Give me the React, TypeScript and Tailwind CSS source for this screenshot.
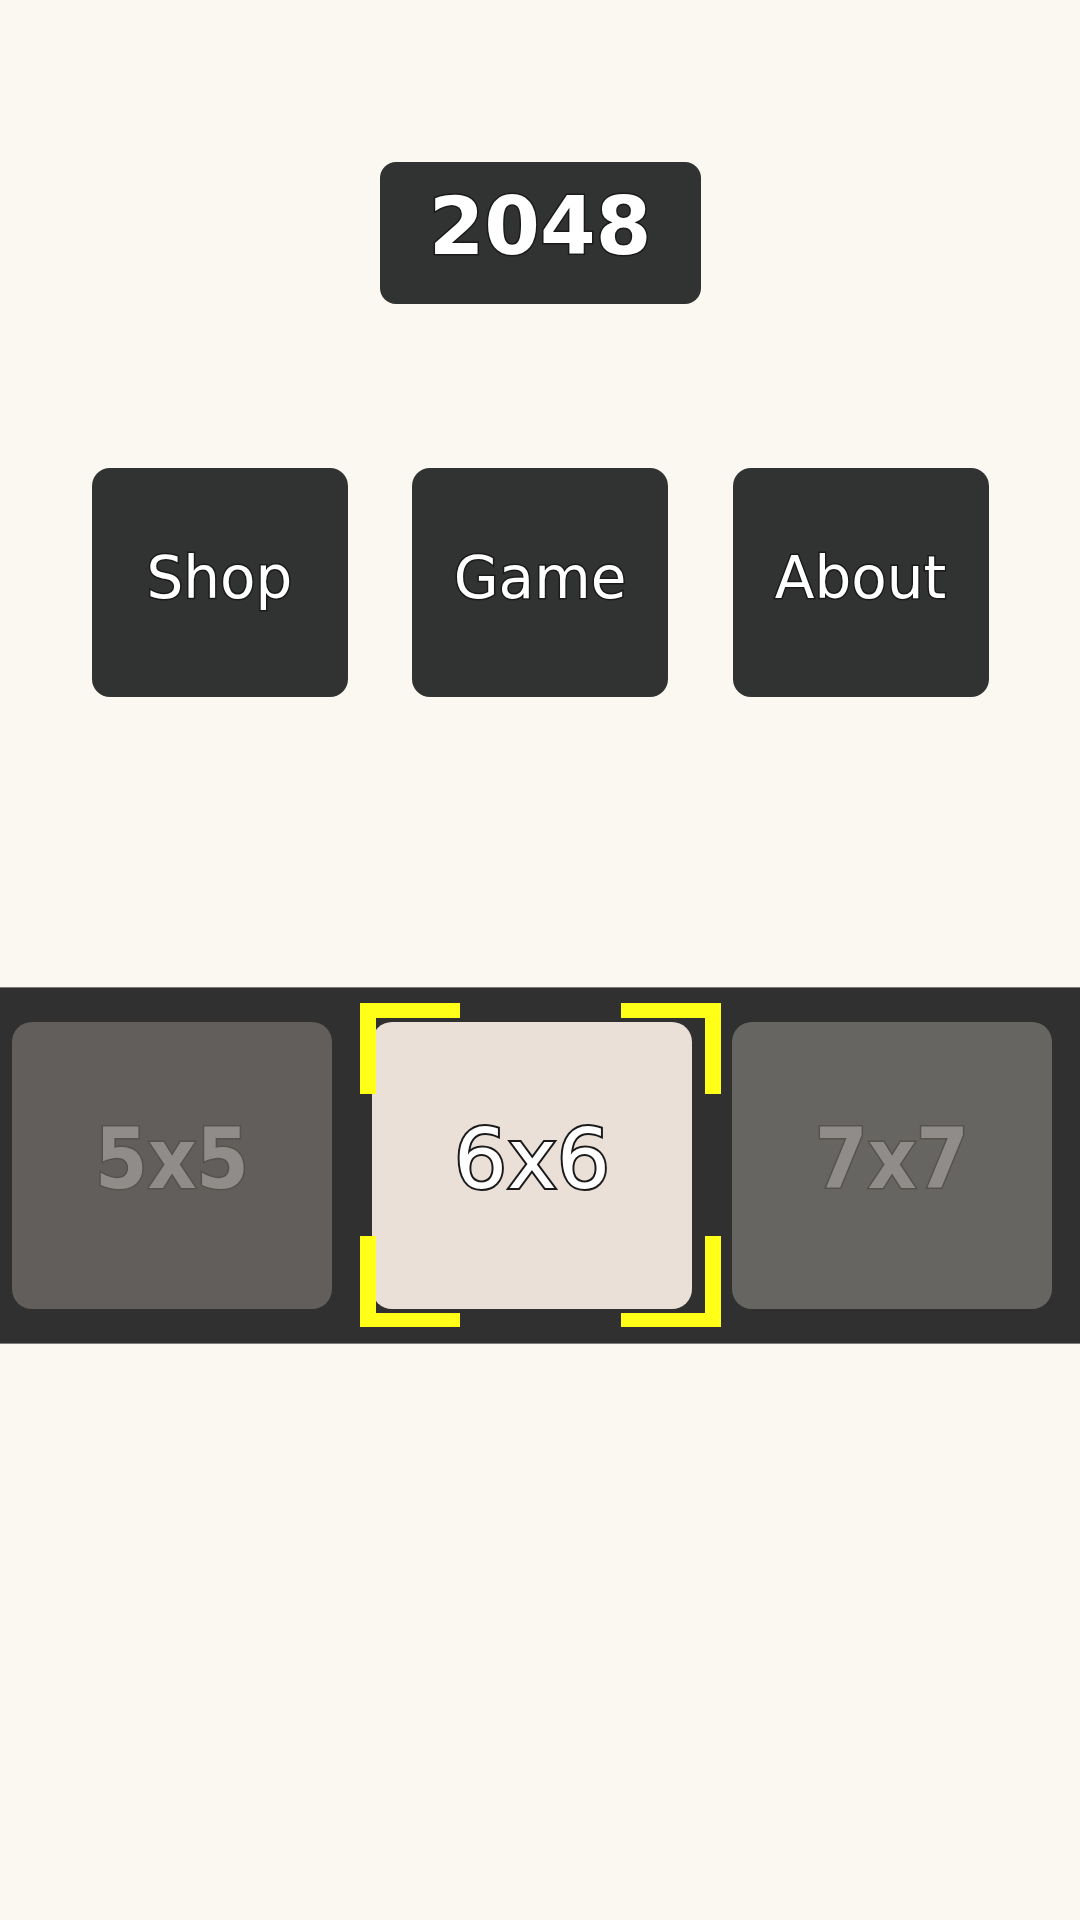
import React from 'react';

const outline = '[-webkit-text-stroke:3px_#1a1a1a] [paint-order:stroke_fill]';

function MenuButton({ label }: { label: string }) {
  return (
    <button className="w-[256px] h-[229px] rounded-[18px] bg-[#313332] flex items-center justify-center pb-[10px]">
      <span className={`text-[58px] leading-none text-white ${outline}`}>{label}</span>
    </button>
  );
}

function Bracket({ className }: { className: string }) {
  return <div className={`absolute w-[100px] h-[91px] border-[#ffff17] ${className}`} />;
}

function SizeTile({ label, bg, selected }: { label: string; bg: string; selected?: boolean }) {
  if (selected) {
    return (
      <div className="relative shrink-0">
        <div className={`w-[320px] h-[287px] rounded-[20px] ${bg} flex items-center justify-center pb-[14px]`}>
          <span className={`text-[84px] leading-none text-white [-webkit-text-stroke:4px_#1a1a1a] [paint-order:stroke_fill]`}>
            {label}
          </span>
        </div>
        {/* selection frame */}
        <Bracket className="-left-[12px] -top-[19px] border-l-[16px] border-t-[15px]" />
        <Bracket className="-right-[29px] -top-[19px] border-r-[16px] border-t-[15px]" />
        <Bracket className="-left-[12px] -bottom-[18px] border-l-[16px] border-b-[14px]" />
        <Bracket className="-right-[29px] -bottom-[18px] border-r-[16px] border-b-[14px]" />
      </div>
    );
  }
  return (
    <div className={`shrink-0 w-[320px] h-[287px] rounded-[20px] ${bg} flex items-center justify-center pb-[14px]`}>
      <span className="font-['DejaVu_Sans_Condensed','DejaVu_Sans',sans-serif] text-[84px] font-bold leading-none text-[#8f8c89] [-webkit-text-stroke:3px_#56534f] [paint-order:stroke_fill]">
        {label}
      </span>
    </div>
  );
}

export default function App() {
  return (
    <div className="w-[1080px] h-[1920px] bg-[#faf8f1] flex flex-col items-center font-['DejaVu_Sans',sans-serif]">
      {/* Title */}
      <div className="mt-[162px] w-[321px] h-[142px] rounded-[16px] bg-[#313332] flex items-center justify-center pb-[12px]">
        <span className={`text-[80px] font-bold leading-none text-white ${outline}`}>2048</span>
      </div>

      {/* Menu */}
      <div className="mt-[164px] flex gap-[64.5px]">
        <MenuButton label="Shop" />
        <MenuButton label="Game" />
        <MenuButton label="About" />
      </div>

      {/* Board size picker */}
      <div className="mt-[290px] w-full h-[357px] bg-[#2f302f] border-y border-[#7d7d7a] flex items-center gap-[40px] pl-[12px]">
        <SizeTile label="5x5" bg="bg-[#625e5b]" />
        <SizeTile label="6x6" bg="bg-[#eae0d8]" selected />
        <SizeTile label="7x7" bg="bg-[#676562]" />
      </div>
    </div>
  );
}
